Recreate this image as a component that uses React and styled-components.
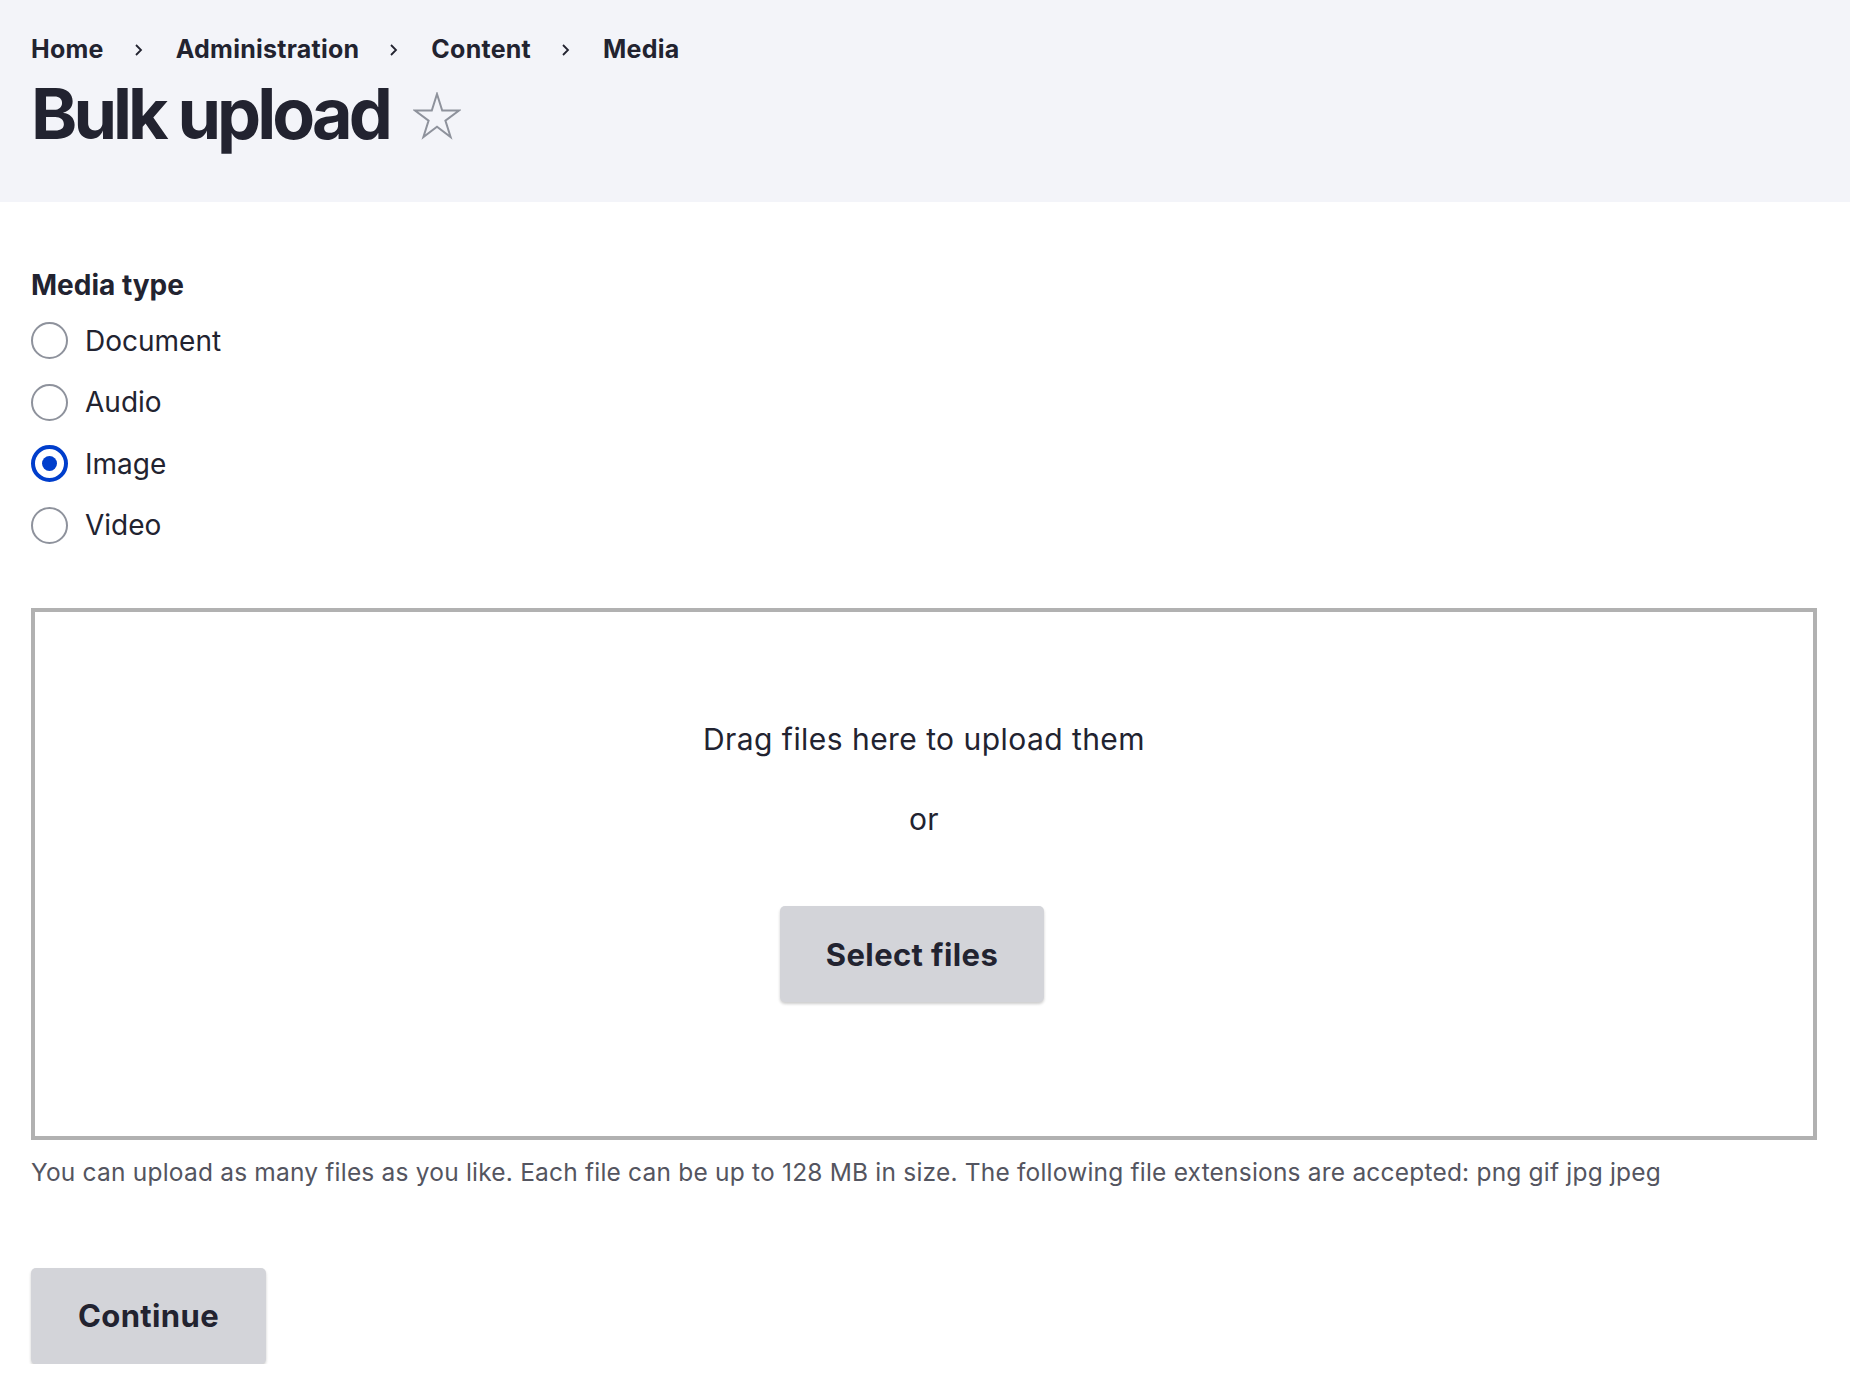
import React, { useState } from "react";
import styled, { createGlobalStyle } from "styled-components";

const GlobalStyle = createGlobalStyle`
  html, body {
    margin: 0;
    padding: 0;
    background: #ffffff;
  }
  body {
    font-family: Inter, "Noto Sans", "Liberation Sans", sans-serif;
    color: #222330;
  }
`;

const Header = styled.header`
  background: #f3f4f9;
  padding: 31px 31px 46px;
`;

const Breadcrumb = styled.nav`
  display: flex;
  align-items: center;
  font-size: 25px;
  font-weight: 700;
  line-height: 37.5px;
  letter-spacing: 0.01em;
`;

const Crumb = styled.a`
  color: #222330;
  text-decoration: none;
`;

const Sep = styled.span`
  display: inline-flex;
  margin: 0 33px 0 30px;
  color: #222330;
`;

const TitleRow = styled.div`
  display: flex;
  align-items: center;
  margin-top: 3px;
`;

const Title = styled.h1`
  margin: 0;
  font-size: 70px;
  font-weight: 700;
  line-height: 84px;
  letter-spacing: -0.056em;
`;

const StarButton = styled.button`
  display: inline-flex;
  background: none;
  border: 0;
  padding: 0;
  margin: 4px 0 0 24px;
  cursor: pointer;
`;

const Main = styled.main`
  padding: 62px 33px 0 31px;
`;

const Fieldset = styled.fieldset`
  border: 0;
  margin: 0;
  padding: 0;
`;

const Legend = styled.legend`
  padding: 0;
  font-size: 28px;
  font-weight: 700;
  line-height: 42px;
`;

const RadioList = styled.div`
  display: flex;
  flex-direction: column;
  gap: 19.5px;
  margin-top: 14px;
`;

const RadioRow = styled.label`
  display: flex;
  align-items: center;
  gap: 17px;
  font-size: 28px;
  line-height: 42px;
  cursor: pointer;
`;

const RadioMark = styled.span`
  box-sizing: border-box;
  width: 37px;
  height: 37px;
  border-radius: 50%;
  border: ${(p) => (p.$checked ? "4px solid #003ecc" : "2px solid #8e929c")};
  display: flex;
  align-items: center;
  justify-content: center;
  background: #fff;
  &::after {
    content: "";
    display: ${(p) => (p.$checked ? "block" : "none")};
    width: 15px;
    height: 15px;
    border-radius: 50%;
    background: #003ecc;
  }
`;

const Dropzone = styled.div`
  margin-top: 62px;
  border: 4px solid #b1b1b1;
  display: flex;
  flex-direction: column;
  align-items: center;
  padding: 105px 0 134px;
`;

const DropText = styled.p`
  margin: 0;
  font-size: 30px;
  line-height: 45px;
  letter-spacing: 0.015em;
  color: #222330;
`;

const OrText = styled(DropText)`
  margin-top: 35px;
`;

const Button = styled.button`
  height: 96px;
  padding: 0 ${(p) => p.$pad || 48}px;
  border: 0;
  border-radius: 5px;
  background: #d3d4d9;
  box-shadow: 0 2px 3px rgba(0, 0, 0, 0.2);
  font-family: inherit;
  font-size: 31px;
  font-weight: 700;
  letter-spacing: 0.012em;
  color: #222330;
  cursor: pointer;
  margin-top: ${(p) => p.$top || 0}px;
  margin-right: ${(p) => p.$offset || 0}px;
`;

const Description = styled.div`
  margin-top: 14px;
  font-size: 24.5px;
  line-height: 36.75px;
  letter-spacing: 0.2px;
  color: #545560;
`;

const Actions = styled.div`
  margin-top: 77px;
  display: flex;
`;

const Chevron = () => (
  <svg width="9" height="14" viewBox="0 0 9 14">
    <path d="M2 2l5 5-5 5" fill="none" stroke="#222330" strokeWidth="1.8" />
  </svg>
);

const Star = () => (
  <svg width="48" height="48" viewBox="0 0 48 48">
    <polygon
      points="24,2 29.2,18.5 46,18.5 32.4,28.6 37.6,45 24,34.8 10.4,45 15.6,28.6 2,18.5 18.8,18.5"
      fill="none"
      stroke="#8e929c"
      strokeWidth="2"
      strokeLinejoin="miter"
    />
  </svg>
);

const types = ["Document", "Audio", "Image", "Video"];
const crumbs = ["Home", "Administration", "Content", "Media"];

export default function App() {
  const [type, setType] = useState("Image");

  return (
    <>
      <GlobalStyle />
      <Header>
        <Breadcrumb>
          {crumbs.map((c, i) => (
            <React.Fragment key={c}>
              {i > 0 && (
                <Sep>
                  <Chevron />
                </Sep>
              )}
              <Crumb href="#">{c}</Crumb>
            </React.Fragment>
          ))}
        </Breadcrumb>
        <TitleRow>
          <Title>Bulk upload</Title>
          <StarButton aria-label="Add to shortcuts">
            <Star />
          </StarButton>
        </TitleRow>
      </Header>
      <Main>
        <Fieldset>
          <Legend>Media type</Legend>
          <RadioList>
            {types.map((t) => (
              <RadioRow key={t} onClick={() => setType(t)}>
                <RadioMark $checked={type === t} />
                {t}
              </RadioRow>
            ))}
          </RadioList>
        </Fieldset>
        <Dropzone>
          <DropText>Drag files here to upload them</DropText>
          <OrText>or</OrText>
          <Button $top={64} $offset={24} $pad={46}>Select files</Button>
        </Dropzone>
        <Description>
          You can upload as many files as you like. Each file can be up to 128 MB in size. The
          following file extensions are accepted: png gif jpg jpeg
        </Description>
        <Actions>
          <Button $pad={47}>Continue</Button>
        </Actions>
      </Main>
    </>
  );
}
